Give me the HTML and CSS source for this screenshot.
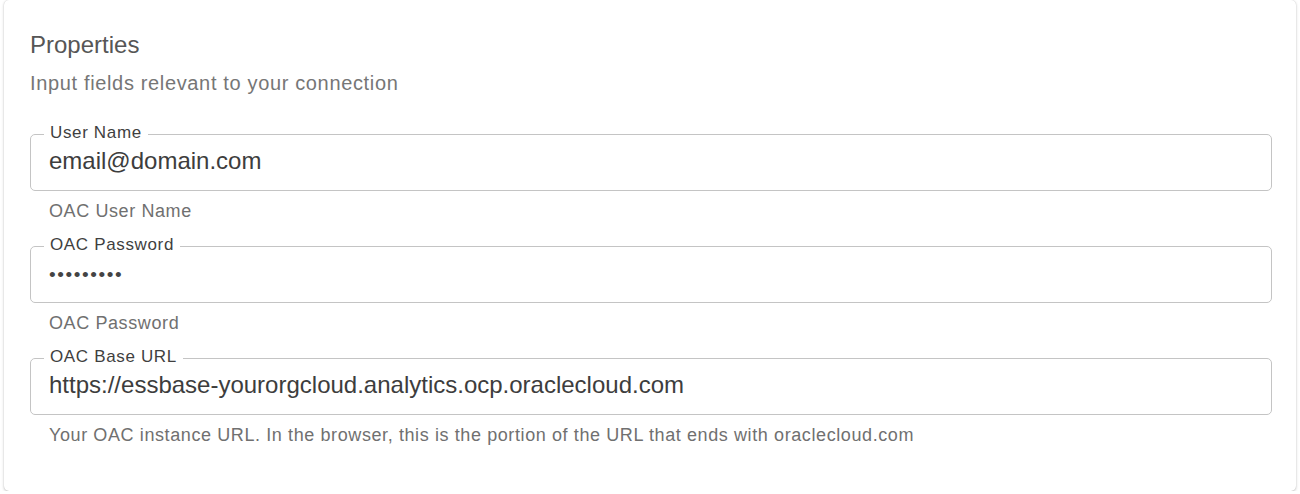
FILE: index.html
```html
<!DOCTYPE html>
<html lang="en">
<head>
<meta charset="utf-8">
<title>Properties</title>
<link rel="stylesheet" href="styles.css">
</head>
<body>
<div class="page">
  <section class="card">
    <h2 class="title">Properties</h2>
    <p class="subtitle">Input fields relevant to your connection</p>

    <div class="field">
      <fieldset class="box">
        <legend class="label">User Name</legend>
        <div class="value">email@domain.com</div>
      </fieldset>
      <p class="helper">OAC User Name</p>
    </div>

    <div class="field">
      <fieldset class="box">
        <legend class="label">OAC Password</legend>
        <div class="value"><span class="dots">•••••••••</span></div>
      </fieldset>
      <p class="helper">OAC Password</p>
    </div>

    <div class="field">
      <fieldset class="box">
        <legend class="label">OAC Base URL</legend>
        <div class="value">https://essbase-yourorgcloud.analytics.ocp.oraclecloud.com</div>
      </fieldset>
      <p class="helper">Your OAC instance URL. In the browser, this is the portion of the URL that ends with oraclecloud.com</p>
    </div>
  </section>
</div>
</body>
</html>
```
FILE: styles.css
```css
html, body {
  margin: 0;
  background: #ffffff;
  font-family: "Liberation Sans", Arial, Helvetica, sans-serif;
}

.page {
  padding: 0 4px;
}

.card {
  box-sizing: border-box;
  height: 491px;
  background: #ffffff;
  border-radius: 5px;
  box-shadow: 0 1px 3px rgba(0, 0, 0, 0.22), 0 0 1px rgba(0, 0, 0, 0.18);
  padding: 31px 24px 0 26px;
}

.title {
  margin: 0;
  font-size: 24px;
  line-height: 28px;
  font-weight: 400;
  color: #565656;
}

.subtitle {
  margin: 12px 0 0;
  font-size: 20px;
  line-height: 24px;
  letter-spacing: 0.65px;
  color: #767676;
}

.field {
  display: flex;
  flex-direction: column;
}

.field:first-of-type {
  margin-top: 30px;
}

.field + .field {
  margin-top: 16px;
}

.box {
  margin: 0;
  padding: 4px 18px 15px;
  border: 1px solid #c4c4c4;
  border-radius: 5px;
  min-width: 0;
}

.label {
  margin-left: -5px;
  padding: 0 6px 2px;
  font-size: 17px;
  line-height: 16px;
  letter-spacing: 0.65px;
  color: #3f3f3f;
}

.value {
  height: 28px;
  font-size: 24px;
  line-height: 28px;
  color: #3d3d3d;
  white-space: nowrap;
}

.dots {
  font-size: 19px;
  line-height: 1;
  letter-spacing: 1.6px;
  color: #444444;
}

.helper {
  margin: 10px 0 0 19px;
  font-size: 18px;
  line-height: 20px;
  letter-spacing: 0.6px;
  color: #707070;
}
```
